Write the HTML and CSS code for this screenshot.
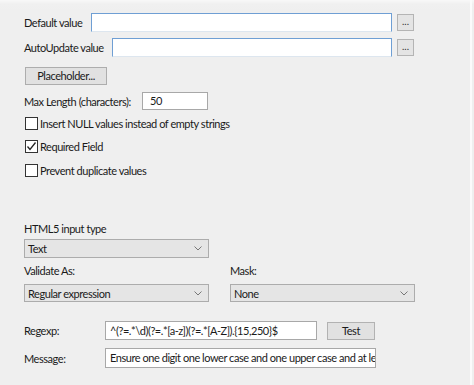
FILE: index.html
```html
<!DOCTYPE html>
<html>
<head>
<meta charset="utf-8">
<link rel="stylesheet" href="styles.css">
</head>
<body>
<div class="panel">
  <div class="row row-default">
    <span class="label lbl-default">Default value</span>
    <span class="input input-focus w-default"></span>
    <span class="dots">...</span>
  </div>
  <div class="row row-auto">
    <span class="label lbl-auto">AutoUpdate value</span>
    <span class="input input-focus w-auto"></span>
    <span class="dots">...</span>
  </div>
  <div class="btn btn-placeholder">Placeholder...</div>
  <div class="row row-max">
    <span class="label lbl-max">Max Length (characters):</span>
    <span class="input w-max">50</span>
  </div>
  <div class="check check-1"><span class="box"></span><span>Insert NULL values instead of empty strings</span></div>
  <div class="check check-2"><span class="box"><svg width="11" height="11" viewBox="0 0 11 11"><polyline points="1.5,5.5 4,8.5 9.5,1.5" fill="none" stroke="#222" stroke-width="1.3"/></svg></span><span>Required Field</span></div>
  <div class="check check-3"><span class="box"></span><span>Prevent duplicate values</span></div>

  <div class="caption cap-html5">HTML5 input type</div>
  <div class="select sel-type"><span>Text</span><svg class="chev" width="8" height="5" viewBox="0 0 8 5"><polyline points="0.5,0.5 4,4 7.5,0.5" fill="none" stroke="#777" stroke-width="1"/></svg></div>

  <div class="pair">
    <div class="col">
      <div class="caption">Validate As:</div>
      <div class="select"><span>Regular expression</span><svg class="chev" width="8" height="5" viewBox="0 0 8 5"><polyline points="0.5,0.5 4,4 7.5,0.5" fill="none" stroke="#777" stroke-width="1"/></svg></div>
    </div>
    <div class="col">
      <div class="caption">Mask:</div>
      <div class="select"><span>None</span><svg class="chev" width="8" height="5" viewBox="0 0 8 5"><polyline points="0.5,0.5 4,4 7.5,0.5" fill="none" stroke="#777" stroke-width="1"/></svg></div>
    </div>
  </div>

  <div class="row row-regexp">
    <span class="label lbl-regexp">Regexp:</span>
    <span class="input w-regexp">^(?=.*\d)(?=.*[a-z])(?=.*[A-Z]).{15,250}$</span>
    <span class="btn btn-test">Test</span>
  </div>
  <div class="row row-message">
    <span class="label lbl-regexp">Message:</span>
    <span class="input w-message">Ensure one digit one lower case and one upper case and at least 15 characters</span>
  </div>
</div>
</body>
</html>
```
FILE: styles.css
```css
html, body {
  margin: 0;
  padding: 0;
}
body {
  width: 474px;
  height: 385px;
  overflow: hidden;
  background: linear-gradient(#f8f8f8 0px, #f0f0f0 4px, #efefef 10px);
  font-family: Lato, "Liberation Sans", sans-serif;
  font-size: 11px;
  letter-spacing: -0.45px;
  color: #1a1a1a;
}
.panel {
  padding-left: 24px;
  padding-top: 13px;
  box-sizing: border-box;
  width: 472px;
  height: 385px;
  border-right: 2px solid #fbfbfb;
}
.row {
  display: flex;
  align-items: center;
}
.label {
  white-space: nowrap;
  flex: none;
}
.lbl-default { width: 67px; }
.lbl-auto { width: 88px; }
.lbl-max { width: 118px; }
.lbl-regexp { width: 81px; }
.input {
  display: block;
  box-sizing: border-box;
  background: #fff;
  border: 1px solid #a8a8a8;
  height: 19px;
  line-height: 17px;
  padding: 0 4px;
  white-space: nowrap;
  overflow: hidden;
  flex: none;
}
.input-focus {
  border-color: #6f9fd4;
  border-bottom-color: #dde6ef;
}
.w-default { width: 301px; }
.w-auto { width: 280px; }
.row-auto { margin-top: 6px; }
.dots {
  box-sizing: border-box;
  width: 17px;
  height: 17px;
  margin-left: 5px;
  border: 1px solid #b4b4b4;
  background: #e4e4e4;
  font-size: 10px;
  line-height: 13px;
  letter-spacing: 0;
  text-align: center;
  color: #333;
  flex: none;
}
.btn {
  box-sizing: border-box;
  border: 1px solid #adadad;
  background: #e1e1e1;
  text-align: center;
  height: 18px;
  line-height: 16px;
}
.btn-placeholder {
  width: 82px;
  margin: 10px 0 0 1px;
}
.row-max { margin-top: 7px; }
.w-max { width: 66px; height: 18px; line-height: 16px; padding-left: 7px; }
.check {
  display: flex;
  align-items: center;
  height: 13px;
  margin-left: 1px;
  white-space: nowrap;
}
.check-1 { margin-top: 7px; }
.check-2 { margin-top: 10px; }
.check-3 { margin-top: 11px; }
.box {
  box-sizing: border-box;
  width: 13px;
  height: 13px;
  border: 1px solid #333;
  background: #fff;
  margin-right: 2px;
  display: flex;
  align-items: center;
  justify-content: center;
  flex: none;
}
.box svg { display: block; }
.caption {
  height: 14px;
  line-height: 14px;
}
.cap-html5 { margin-top: 45px; }
.select {
  box-sizing: border-box;
  width: 185px;
  height: 19px;
  margin-top: 3px;
  border: 1px solid #acacac;
  background: #e5e5e5;
  display: flex;
  align-items: center;
  justify-content: space-between;
  padding: 0 6px 0 3px;
}
.chev { display: block; }
.pair {
  display: flex;
  gap: 21px;
  margin-top: 6px;
}
.pair .select { margin-top: 6px; height: 18px; }
.row-regexp { margin-top: 19px; }
.w-regexp { width: 212px; padding-left: 4px; }
.btn-test {
  width: 48px;
  margin-left: 10px;
  border-color: #b2b2b2;
}
.row-message { margin-top: 8px; }
.w-message { width: 271px; height: 20px; line-height: 18px; }
```
